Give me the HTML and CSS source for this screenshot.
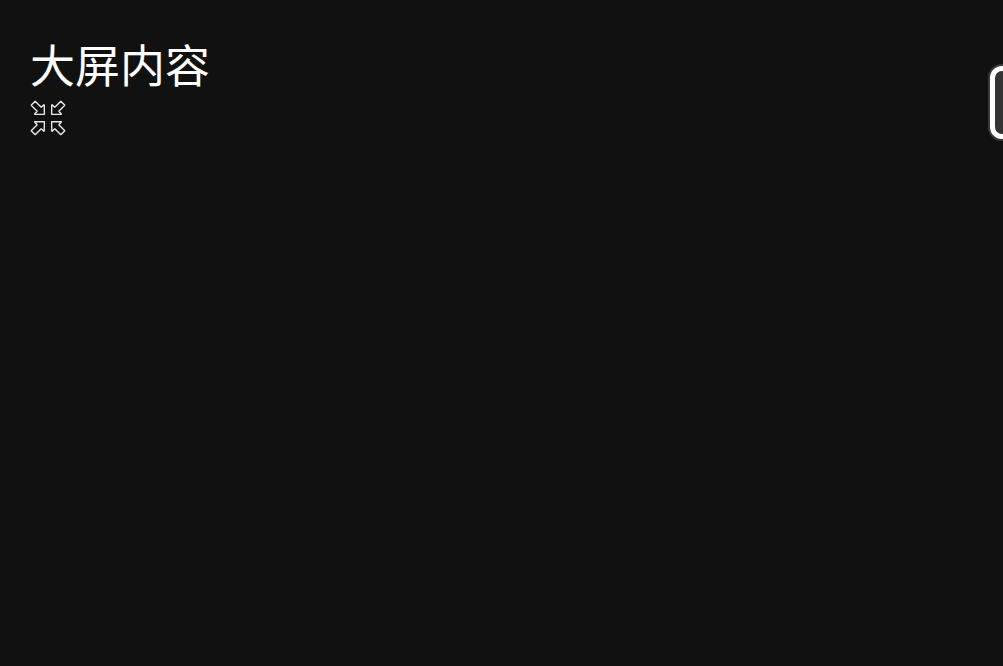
FILE: index.html
```html
<!DOCTYPE html>
<html lang="zh-CN">
  <head>
    <meta charset="UTF-8" />
    <meta name="viewport" content="width=device-width, initial-scale=1.0" />
    <title>大屏内容</title>
    <link rel="stylesheet" href="styles.css">
  </head>
  <body>
    <div class="screen">
      <h1 class="screen-title">大屏内容</h1>
      <button class="exit-btn" type="button" aria-label="退出全屏">
        <svg class="exit-icon" viewBox="0 0 36 36" width="36" height="36" fill="none" stroke="currentColor" stroke-width="1.4" stroke-linejoin="bevel">
          <path d="M5.2 1.2 L1.2 5.2 L7.2 11.2 L4.4 14.2 L14.4 14.4 L14.2 4.4 L11.2 7.2 Z" />
          <path d="M30.8 1.2 L34.8 5.2 L28.8 11.2 L31.6 14.2 L21.6 14.4 L21.8 4.4 L24.8 7.2 Z" />
          <path d="M5.2 34.8 L1.2 30.8 L7.2 24.8 L4.4 21.8 L14.4 21.6 L14.2 31.6 L11.2 28.8 Z" />
          <path d="M30.8 34.8 L34.8 30.8 L28.8 24.8 L31.6 21.8 L21.6 21.6 L21.8 31.6 L24.8 28.8 Z" />
        </svg>
      </button>
    </div>

    <!-- 右侧抽屉把手 -->
    <div class="drawer-handle"></div>
  </body>
</html>
```

FILE: styles.css
```css
* {
  box-sizing: border-box;
}

html,
body {
  height: 100%;
}

body {
  margin: 0;
  background-color: #111;
  color: #fff;
  font-family: "Liberation Sans", "Noto Sans CJK SC", sans-serif;
  overflow: hidden;
}

.screen {
  padding: 39px 30px;
}

.screen-title {
  margin: 0;
  font-size: 45px;
  line-height: 58px;
  font-weight: 400;
}

.exit-btn {
  display: block;
  padding: 0;
  margin: 3px 0 0;
  border: 0;
  background: none;
  color: #e8e8e8;
}

.exit-icon {
  display: block;
}

.drawer-handle {
  position: absolute;
  top: 66px;
  right: -30px;
  width: 43px;
  height: 73px;
  background-color: #333;
  border: 5px solid #fff;
  border-radius: 12px;
  box-shadow: 0 0 0 2px #3a3a3a;
}
```
